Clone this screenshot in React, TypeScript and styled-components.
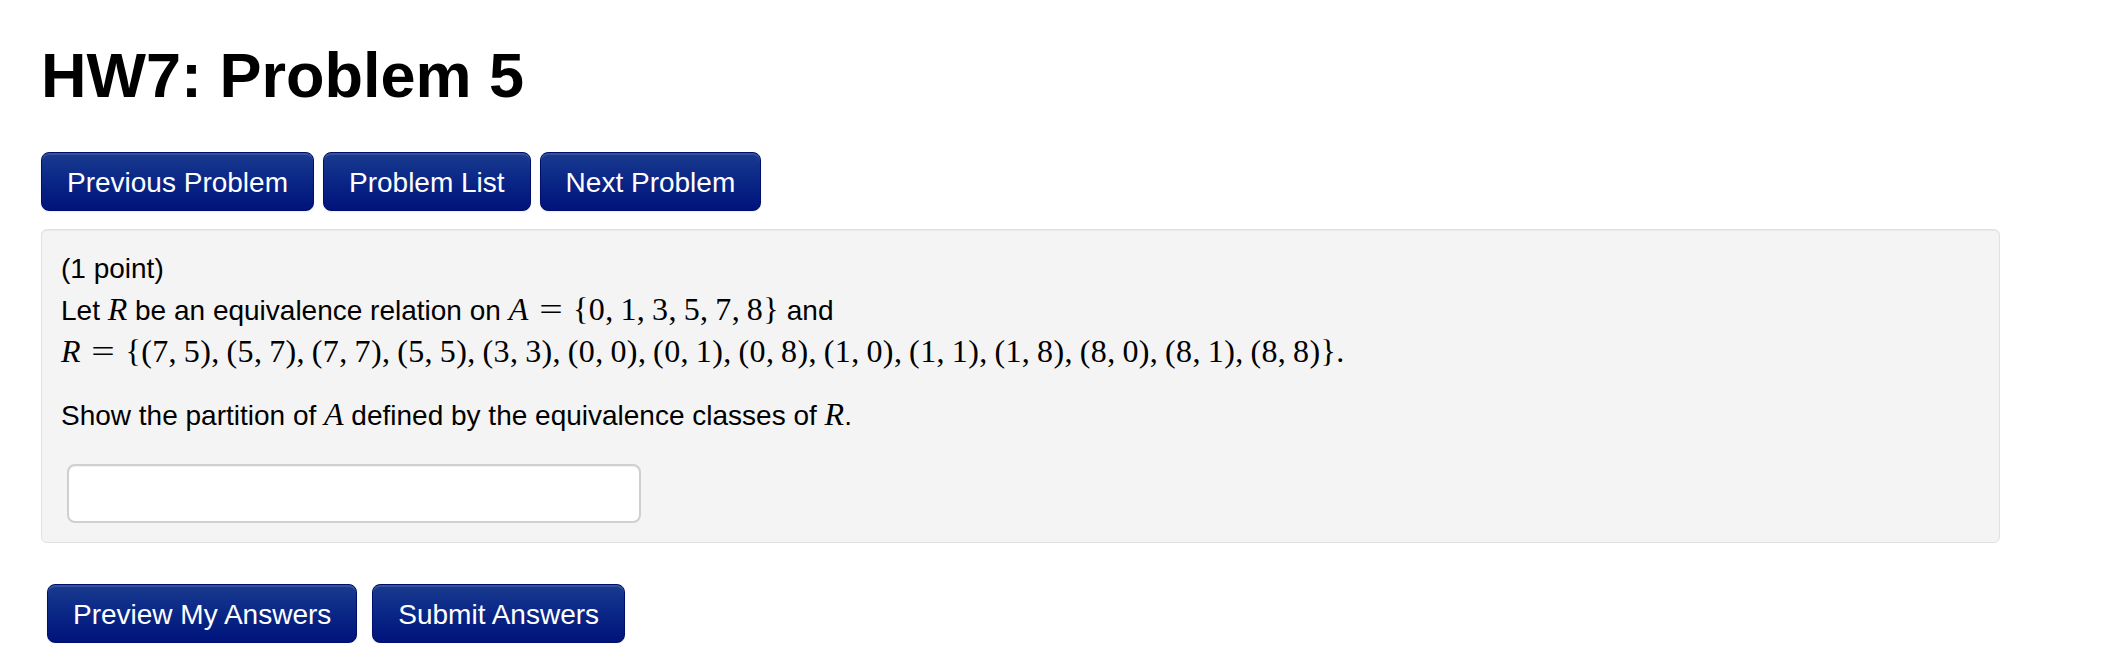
import React from "react";
import styled, { createGlobalStyle } from "styled-components";

const Global = createGlobalStyle`
  html, body { margin: 0; padding: 0; background: #fff; }
  body { font-family: "Liberation Sans", Arial, Helvetica, sans-serif; color: #000; }
`;

const Page = styled.main`
  width: 1959px;
  padding: 41px 0 0 41px;
  box-sizing: content-box;
`;

const Title = styled.h1`
  margin: 0;
  font-family: "Liberation Sans", Arial, Helvetica, sans-serif;
  font-weight: 700;
  font-size: 63px;
  line-height: 69px;
  color: #000;
`;

const Toolbar = styled.div<{ $gap: number; $top: number; $left?: number }>`
  display: flex;
  gap: ${(p) => p.$gap}px;
  margin-top: ${(p) => p.$top}px;
  margin-left: ${(p) => p.$left ?? 0}px;
`;

const NavButton = styled.button`
  font-family: "Liberation Sans", Arial, Helvetica, sans-serif;
  font-size: 28px;
  line-height: 33px;
  color: #fff;
  padding: 13px 25px 11px;
  border: 1px solid #00106a;
  border-radius: 8px;
  background: linear-gradient(to bottom, #1a3b8f 0%, #0b2887 45%, #00137c 100%);
  box-shadow: inset 0 2px 0 rgba(255, 255, 255, 0.12), 0 1px 2px rgba(0, 0, 0, 0.08);
  cursor: pointer;
  white-space: nowrap;
`;

const Well = styled.section`
  margin-top: 18px;
  background: #f4f4f4;
  border: 1px solid #e1e1e1;
  border-radius: 6px;
  box-shadow: inset 0 1px 1px rgba(0, 0, 0, 0.05);
  padding: 18px 19px 19px;
`;

const Para = styled.div<{ $top?: number }>`
  font-size: 28px;
  line-height: 42px;
  margin-top: ${(p) => p.$top ?? 0}px;
  white-space: nowrap;
`;

const Math = styled.span`
  font-family: "Liberation Serif", "Times New Roman", serif;
  font-size: 32px;
  line-height: 1;
  letter-spacing: 0.4px;
`;

const Var = styled.i`
  font-family: "Liberation Serif", "Times New Roman", serif;
  font-style: italic;
  font-size: 32px;
  line-height: 1;
`;

const Rel = styled.span`
  display: inline-block;
  margin: 0 13px;
  font-size: 32px;
  line-height: 1;
  transform: scaleX(1.3);
`;

const AnswerInput = styled.input`
  display: block;
  box-sizing: border-box;
  width: 574px;
  height: 59px;
  margin: 27px 0 0 6px;
  border: 2px solid #cfcfcf;
  border-radius: 8px;
  background: #fff;
  box-shadow: inset 0 1px 1px rgba(0, 0, 0, 0.06);
  font-size: 28px;
  padding: 0 12px;
  outline: none;
`;

const pairs = [
  [7, 5], [5, 7], [7, 7], [5, 5], [3, 3], [0, 0], [0, 1],
  [0, 8], [1, 0], [1, 1], [1, 8], [8, 0], [8, 1], [8, 8],
];

const T = "\u2009";

export default function App() {
  const rel = pairs.map(([a, b]) => `(${a},${T}${b})`).join(`,${T}`);
  return (
    <>
      <Global />
      <Page>
        <Title>HW7: Problem 5</Title>
        <Toolbar $gap={9} $top={42}>
          <NavButton>Previous Problem</NavButton>
          <NavButton>Problem List</NavButton>
          <NavButton>Next Problem</NavButton>
        </Toolbar>
        <Well>
          <Para>(1 point)</Para>
          <Para>
            Let <Var>R</Var> be an equivalence relation on{" "}
            <Math>
              <Var>A</Var>
              <Rel>=</Rel>
              {`{0,${T}1,${T}3,${T}5,${T}7,${T}8}`}
            </Math>{" "}
            and
          </Para>
          <Para>
            <Math>
              <Var>R</Var>
              <Rel>=</Rel>
              {`{${rel}}.`}
            </Math>
          </Para>
          <Para $top={21}>
            Show the partition of <Var>A</Var> defined by the equivalence classes of <Var>R</Var>.
          </Para>
          <AnswerInput type="text" aria-label="answer" />
        </Well>
        <Toolbar $gap={15} $top={41} $left={6}>
          <NavButton>Preview My Answers</NavButton>
          <NavButton>Submit Answers</NavButton>
        </Toolbar>
      </Page>
    </>
  );
}
